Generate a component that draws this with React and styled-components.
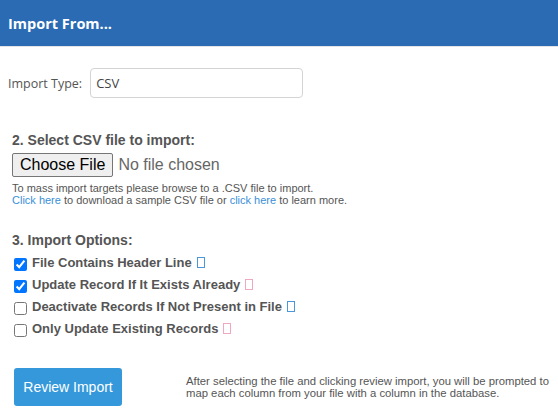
import styled, { createGlobalStyle } from "styled-components";

const GlobalStyle = createGlobalStyle`
  body {
    margin: 0;
    background: #fff;
    font-family: "Liberation Sans", Arial, sans-serif;
  }
`;

const Panel = styled.div`
  width: 558px;
  height: 412px;
  overflow: hidden;
  background: #fff;
`;

const Header = styled.div`
  height: 46px;
  background: #2a6bb3;
  border-bottom: 1px solid #e4e4e4;
  display: flex;
  align-items: center;
  padding-left: 8px;
  color: #fff;
  font-family: "Open Sans", sans-serif;
  font-weight: 700;
  font-size: 14.5px;
`;

const TypeRow = styled.div`
  display: flex;
  align-items: center;
  gap: 8px;
  margin: 21px 0 0 8px;
  font-family: "Open Sans", sans-serif;
  font-size: 12.5px;
  color: #555;
`;

const TypeInput = styled.div`
  width: 206px;
  height: 28px;
  border: 1px solid #d4d4d4;
  border-radius: 4px;
  padding-left: 5px;
  display: flex;
  align-items: center;
  color: #444;
  font-size: 13px;
`;

const Section = styled.div`
  padding-left: 12px;
  margin-top: ${(p) => p.$top}px;
`;

const Heading = styled.div`
  font-weight: 700;
  font-size: 14px;
  color: #555;
  line-height: 16px;
`;

const FileInput = styled.input`
  display: block;
  margin-top: 5px;
  font-family: "Liberation Sans", Arial, sans-serif;
  font-size: 16px;
  color: #666;

  &::file-selector-button {
    font-family: "Liberation Sans", Arial, sans-serif;
    font-size: 16px;
    color: #000;
    height: 24px;
    padding: 0 7px;
    margin-right: 5px;
    border: 1px solid #767676;
    border-radius: 2px;
    background: #efefef;
  }
`;

const Note = styled.div`
  margin-top: 5px;
  font-size: 11px;
  line-height: 12px;
  color: #555;
`;

const Link = styled.a`
  color: #3a8fd9;
  text-decoration: none;
`;

const Options = styled.div`
  display: flex;
  flex-direction: column;
  gap: 5px;
  margin-top: 6px;
`;

const Option = styled.label`
  display: flex;
  align-items: center;
  font-weight: 700;
  font-size: 13px;
  color: #555;
  height: 17px;
`;

const Check = styled.input`
  width: 13px;
  height: 13px;
  margin: 4px 5px 0 2px;
`;

const Tofu = styled.span`
  display: inline-block;
  width: 6px;
  height: 9px;
  margin-left: 5px;
  border: 1px solid ${(p) => (p.$pink ? "#f0a8c0" : "#4a97dc")};
`;

const Footer = styled.div`
  display: flex;
  align-items: center;
  margin: 31px 0 0 14px;
`;

const ReviewButton = styled.button`
  width: 108px;
  height: 38px;
  border: none;
  border-radius: 3px;
  background: #3498db;
  color: #fff;
  font-family: "Liberation Sans", Arial, sans-serif;
  font-size: 14px;
`;

const FooterNote = styled.div`
  margin-left: 64px;
  font-size: 11.3px;
  line-height: 12px;
  color: #555;
`;

const options = [
  { label: "File Contains Header Line", checked: true },
  { label: "Update Record If It Exists Already", checked: true, pink: true },
  { label: "Deactivate Records If Not Present in File", checked: false },
  { label: "Only Update Existing Records", checked: false, pink: true },
];

export default function App() {
  return (
    <Panel>
      <GlobalStyle />
      <Header>Import From...</Header>
      <TypeRow>
        Import Type:
        <TypeInput>CSV</TypeInput>
      </TypeRow>
      <Section $top={34}>
        <Heading>2. Select CSV file to import:</Heading>
        <FileInput type="file" />
        <Note>
          To mass import targets please browse to a .CSV file to import.
          <br />
          <Link href="#">Click here</Link> to download a sample CSV file or{" "}
          <Link href="#">click here</Link> to learn more.
        </Note>
      </Section>
      <Section $top={26}>
        <Heading>3. Import Options:</Heading>
        <Options>
          {options.map((o) => (
            <Option key={o.label}>
              <Check type="checkbox" defaultChecked={o.checked} />
              {o.label}
              <Tofu $pink={o.pink} />
            </Option>
          ))}
        </Options>
      </Section>
      <Footer>
        <ReviewButton>Review Import</ReviewButton>
        <FooterNote>
          After selecting the file and clicking review import, you will be prompted to
          <br />
          map each column from your file with a column in the database.
        </FooterNote>
      </Footer>
    </Panel>
  );
}
